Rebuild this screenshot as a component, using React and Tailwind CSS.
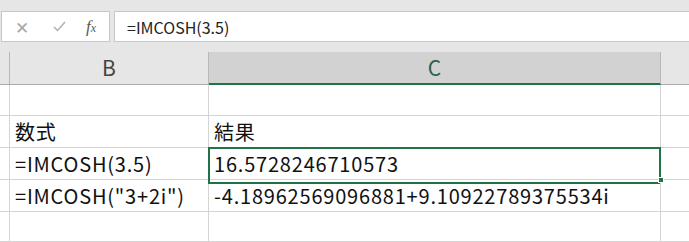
import React from 'react';

const FONT = { fontFamily: '"Noto Sans CJK JP", "Noto Sans", sans-serif' };

const Row = ({ b, c, selected }) => (
    <div className="flex h-[36px] border-b border-[#d4d4d4] bg-white">
        <div className="w-[10px] shrink-0 border-r border-[#d4d4d4]" />
        <div className="w-[199px] shrink-0 border-r border-[#d4d4d4] flex items-center pl-[5px] pt-[1px] text-[20px] tracking-[0.8px] text-[#111] whitespace-nowrap overflow-hidden">
            {b}
        </div>
        <div className="relative w-[452px] shrink-0 border-r border-[#d4d4d4] flex items-center pl-[5px] pt-[1px] text-[20px] tracking-[0.8px] text-[#111] whitespace-nowrap overflow-visible">
            {selected && (
                <>
                    <div className="absolute left-[-1px] top-[-1px] w-[453px] h-[37px] border-2 border-[#217346] pointer-events-none" />
                    <div className="absolute right-[-4px] bottom-[-4px] w-[6px] h-[6px] bg-[#217346] border border-white z-10" />
                </>
            )}
            {c}
        </div>
        <div className="flex-1" />
    </div>
);

export default function App() {
    return (
        <div className="w-[689px] h-[242px] overflow-hidden bg-[#e6e6e6] flex flex-col" style={FONT}>
            {/* formula bar */}
            <div className="h-[42px] pt-[11px] pl-[1px] flex gap-[4px] border-b border-[#e6e6e6]">
                <div className="w-[109px] h-[31px] bg-white border border-[#c8c8c8] flex items-center">
                    <span className="w-[38px] text-center text-[17px] leading-none ml-[1px] text-[#a8a8a8]">✕</span>
                    <svg className="ml-[12px]" width="13" height="11" viewBox="0 0 13 11">
                        <path d="M1 6 L4.5 9.5 L12 1" fill="none" stroke="#b0b0b0" strokeWidth="1.5" />
                    </svg>
                    <span className="ml-[20px] text-[17px] italic text-[#5a5a5a] leading-none" style={{ fontFamily: '"Liberation Serif", serif' }}>
                        f<span className="text-[12px]">x</span>
                    </span>
                </div>
                <div className="flex-1 h-[31px] bg-white border border-[#c8c8c8] border-r-0 flex items-center pl-[12px] text-[16px] text-[#222]">
                    =IMCOSH(3.5)
                </div>
            </div>
            {/* header row */}
            <div className="mt-[10px] h-[33px] flex border-b border-[#ababab]">
                <div className="w-[10px] shrink-0 border-r border-[#b8b8b8]" />
                <div className="w-[199px] shrink-0 border-r border-[#b8b8b8] flex items-center justify-center text-[21px] text-[#444]">
                    B
                </div>
                <div className="w-[452px] shrink-0 bg-[#d2d2d2] border-r border-[#b8b8b8] border-b-[2px] border-b-[#217346] -mb-[1px] flex items-center justify-center text-[21px] text-[#2d5f4d]">
                    C
                </div>
                <div className="flex-1" />
            </div>
            <Row b="" c="" />
            <Row b="数式" c="結果" />
            <Row b="=IMCOSH(3.5)" c="16.5728246710573" selected />
            <Row b={'=IMCOSH("3+2i")'} c="-4.18962569096881+9.10922789375534i" />
            <Row b="" c="" />
        </div>
    );
}
